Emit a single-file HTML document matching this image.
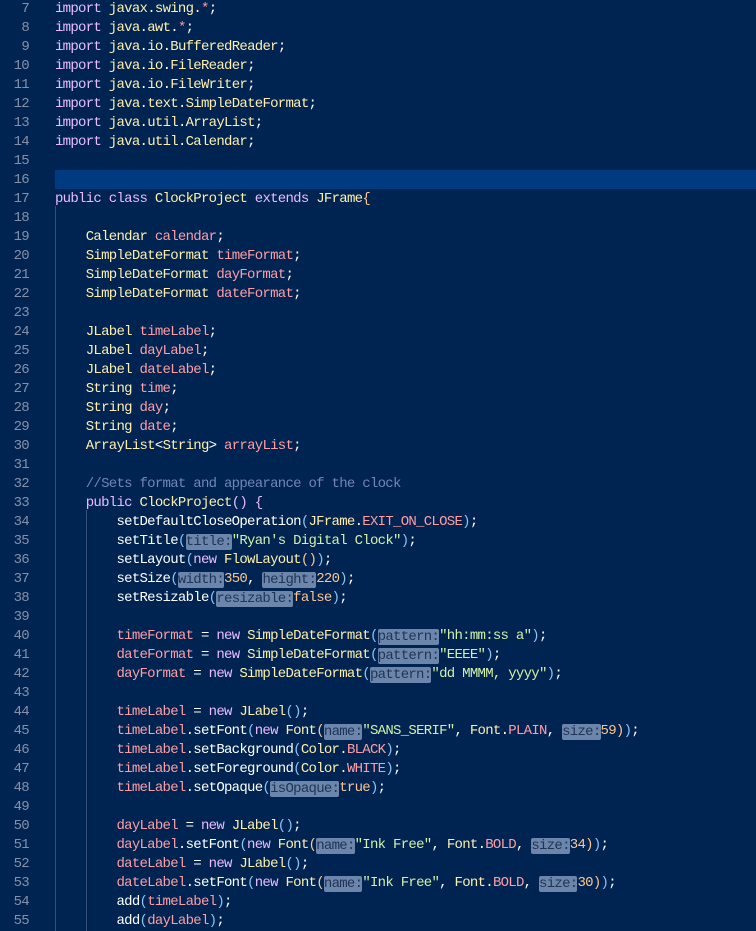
<!DOCTYPE html>
<html><head><meta charset="utf-8"><style>
html,body{margin:0;padding:0;}
body{width:756px;height:931px;overflow:hidden;background:#002451;position:relative;font-family:"Liberation Mono",monospace;font-size:14px;letter-spacing:-0.72px;}
.l{position:absolute;left:0;width:756px;height:19px;line-height:19px;white-space:pre;color:#ffffff;}
.n{position:absolute;left:0;top:1px;width:29px;text-align:right;color:#8590a8;}
.c{position:absolute;left:55px;top:1px;}
.hl{background:#003a80;}
.k{color:#ebbbff}.t{color:#ffeead}.v{color:#ff9da4}.s{color:#d1f1a9}.m{color:#ffc58f}.cm{color:#7285b7}.b{color:#89c4f4}
.h{background:#6c86ab;color:#203458;border-radius:2px;display:inline-block;line-height:16px;height:16px;vertical-align:top;margin-top:2px;}
.g{position:absolute;width:1px;background:#34507a;}
</style></head><body>
<div class="g" style="left:55px;top:206px;height:725px"></div>
<div class="g" style="left:86px;top:510px;height:421px"></div>
<div class="l" style="top:-1px"><span class="n">7</span><span class="c"><span class="k">import</span> <span class="t">javax</span>.<span class="t">swing</span>.<span class="v">*</span>;</span></div>
<div class="l" style="top:18px"><span class="n">8</span><span class="c"><span class="k">import</span> <span class="t">java</span>.<span class="t">awt</span>.<span class="v">*</span>;</span></div>
<div class="l" style="top:37px"><span class="n">9</span><span class="c"><span class="k">import</span> <span class="t">java</span>.<span class="t">io</span>.<span class="t">BufferedReader</span>;</span></div>
<div class="l" style="top:56px"><span class="n">10</span><span class="c"><span class="k">import</span> <span class="t">java</span>.<span class="t">io</span>.<span class="t">FileReader</span>;</span></div>
<div class="l" style="top:75px"><span class="n">11</span><span class="c"><span class="k">import</span> <span class="t">java</span>.<span class="t">io</span>.<span class="t">FileWriter</span>;</span></div>
<div class="l" style="top:94px"><span class="n">12</span><span class="c"><span class="k">import</span> <span class="t">java</span>.<span class="t">text</span>.<span class="t">SimpleDateFormat</span>;</span></div>
<div class="l" style="top:113px"><span class="n">13</span><span class="c"><span class="k">import</span> <span class="t">java</span>.<span class="t">util</span>.<span class="t">ArrayList</span>;</span></div>
<div class="l" style="top:132px"><span class="n">14</span><span class="c"><span class="k">import</span> <span class="t">java</span>.<span class="t">util</span>.<span class="t">Calendar</span>;</span></div>
<div class="l" style="top:151px"><span class="n">15</span></div>
<div class="l" style="top:170px"><div class="hl" style="position:absolute;left:55px;right:0;top:0;height:19px"></div><span class="n">16</span></div>
<div class="l" style="top:189px"><span class="n">17</span><span class="c"><span class="k">public</span> <span class="k">class</span> <span class="t">ClockProject</span> <span class="k">extends</span> <span class="t">JFrame</span><span class="m">{</span></span></div>
<div class="l" style="top:208px"><span class="n">18</span></div>
<div class="l" style="top:227px"><span class="n">19</span><span class="c">    <span class="t">Calendar</span> <span class="v">calendar</span>;</span></div>
<div class="l" style="top:246px"><span class="n">20</span><span class="c">    <span class="t">SimpleDateFormat</span> <span class="v">timeFormat</span>;</span></div>
<div class="l" style="top:265px"><span class="n">21</span><span class="c">    <span class="t">SimpleDateFormat</span> <span class="v">dayFormat</span>;</span></div>
<div class="l" style="top:284px"><span class="n">22</span><span class="c">    <span class="t">SimpleDateFormat</span> <span class="v">dateFormat</span>;</span></div>
<div class="l" style="top:303px"><span class="n">23</span></div>
<div class="l" style="top:322px"><span class="n">24</span><span class="c">    <span class="t">JLabel</span> <span class="v">timeLabel</span>;</span></div>
<div class="l" style="top:341px"><span class="n">25</span><span class="c">    <span class="t">JLabel</span> <span class="v">dayLabel</span>;</span></div>
<div class="l" style="top:360px"><span class="n">26</span><span class="c">    <span class="t">JLabel</span> <span class="v">dateLabel</span>;</span></div>
<div class="l" style="top:379px"><span class="n">27</span><span class="c">    <span class="t">String</span> <span class="v">time</span>;</span></div>
<div class="l" style="top:398px"><span class="n">28</span><span class="c">    <span class="t">String</span> <span class="v">day</span>;</span></div>
<div class="l" style="top:417px"><span class="n">29</span><span class="c">    <span class="t">String</span> <span class="v">date</span>;</span></div>
<div class="l" style="top:436px"><span class="n">30</span><span class="c">    <span class="t">ArrayList</span>&lt;<span class="t">String</span>&gt; <span class="v">arrayList</span>;</span></div>
<div class="l" style="top:455px"><span class="n">31</span></div>
<div class="l" style="top:474px"><span class="n">32</span><span class="c">    <span class="cm">//Sets format and appearance of the clock</span></span></div>
<div class="l" style="top:493px"><span class="n">33</span><span class="c">    <span class="k">public</span> <span class="t">ClockProject</span><span class="k">()</span> <span class="k">{</span></span></div>
<div class="l" style="top:512px"><span class="n">34</span><span class="c">        setDefaultCloseOperation<span class="b">(</span><span class="t">JFrame</span>.<span class="v">EXIT_ON_CLOSE</span><span class="b">)</span>;</span></div>
<div class="l" style="top:531px"><span class="n">35</span><span class="c">        setTitle<span class="b">(</span><span class="h">title:</span><span class="s">"Ryan's Digital Clock"</span><span class="b">)</span>;</span></div>
<div class="l" style="top:550px"><span class="n">36</span><span class="c">        setLayout<span class="b">(</span><span class="k">new</span> <span class="t">FlowLayout</span><span class="m">()</span><span class="b">)</span>;</span></div>
<div class="l" style="top:569px"><span class="n">37</span><span class="c">        setSize<span class="b">(</span><span class="h">width:</span><span class="m">350</span>, <span class="h">height:</span><span class="m">220</span><span class="b">)</span>;</span></div>
<div class="l" style="top:588px"><span class="n">38</span><span class="c">        setResizable<span class="b">(</span><span class="h">resizable:</span><span class="m">false</span><span class="b">)</span>;</span></div>
<div class="l" style="top:607px"><span class="n">39</span></div>
<div class="l" style="top:626px"><span class="n">40</span><span class="c">        <span class="v">timeFormat</span> = <span class="k">new</span> <span class="t">SimpleDateFormat</span><span class="b">(</span><span class="h">pattern:</span><span class="s">"hh:mm:ss a"</span><span class="b">)</span>;</span></div>
<div class="l" style="top:645px"><span class="n">41</span><span class="c">        <span class="v">dateFormat</span> = <span class="k">new</span> <span class="t">SimpleDateFormat</span><span class="b">(</span><span class="h">pattern:</span><span class="s">"EEEE"</span><span class="b">)</span>;</span></div>
<div class="l" style="top:664px"><span class="n">42</span><span class="c">        <span class="v">dayFormat</span> = <span class="k">new</span> <span class="t">SimpleDateFormat</span><span class="b">(</span><span class="h">pattern:</span><span class="s">"dd MMMM, yyyy"</span><span class="b">)</span>;</span></div>
<div class="l" style="top:683px"><span class="n">43</span></div>
<div class="l" style="top:702px"><span class="n">44</span><span class="c">        <span class="v">timeLabel</span> = <span class="k">new</span> <span class="t">JLabel</span><span class="b">()</span>;</span></div>
<div class="l" style="top:721px"><span class="n">45</span><span class="c">        <span class="v">timeLabel</span>.setFont<span class="b">(</span><span class="k">new</span> <span class="t">Font</span><span class="m">(</span><span class="h">name:</span><span class="s">"SANS_SERIF"</span>, <span class="t">Font</span>.<span class="v">PLAIN</span>, <span class="h">size:</span><span class="m">59)</span><span class="b">)</span>;</span></div>
<div class="l" style="top:740px"><span class="n">46</span><span class="c">        <span class="v">timeLabel</span>.setBackground<span class="b">(</span><span class="t">Color</span>.<span class="v">BLACK</span><span class="b">)</span>;</span></div>
<div class="l" style="top:759px"><span class="n">47</span><span class="c">        <span class="v">timeLabel</span>.setForeground<span class="b">(</span><span class="t">Color</span>.<span class="v">WHITE</span><span class="b">)</span>;</span></div>
<div class="l" style="top:778px"><span class="n">48</span><span class="c">        <span class="v">timeLabel</span>.setOpaque<span class="b">(</span><span class="h">isOpaque:</span><span class="m">true</span><span class="b">)</span>;</span></div>
<div class="l" style="top:797px"><span class="n">49</span></div>
<div class="l" style="top:816px"><span class="n">50</span><span class="c">        <span class="v">dayLabel</span> = <span class="k">new</span> <span class="t">JLabel</span><span class="b">()</span>;</span></div>
<div class="l" style="top:835px"><span class="n">51</span><span class="c">        <span class="v">dayLabel</span>.setFont<span class="b">(</span><span class="k">new</span> <span class="t">Font</span><span class="m">(</span><span class="h">name:</span><span class="s">"Ink Free"</span>, <span class="t">Font</span>.<span class="v">BOLD</span>, <span class="h">size:</span><span class="m">34)</span><span class="b">)</span>;</span></div>
<div class="l" style="top:854px"><span class="n">52</span><span class="c">        <span class="v">dateLabel</span> = <span class="k">new</span> <span class="t">JLabel</span><span class="b">()</span>;</span></div>
<div class="l" style="top:873px"><span class="n">53</span><span class="c">        <span class="v">dateLabel</span>.setFont<span class="b">(</span><span class="k">new</span> <span class="t">Font</span><span class="m">(</span><span class="h">name:</span><span class="s">"Ink Free"</span>, <span class="t">Font</span>.<span class="v">BOLD</span>, <span class="h">size:</span><span class="m">30)</span><span class="b">)</span>;</span></div>
<div class="l" style="top:892px"><span class="n">54</span><span class="c">        add<span class="b">(</span><span class="v">timeLabel</span><span class="b">)</span>;</span></div>
<div class="l" style="top:911px"><span class="n">55</span><span class="c">        add<span class="b">(</span><span class="v">dayLabel</span><span class="b">)</span>;</span></div>
</body></html>
